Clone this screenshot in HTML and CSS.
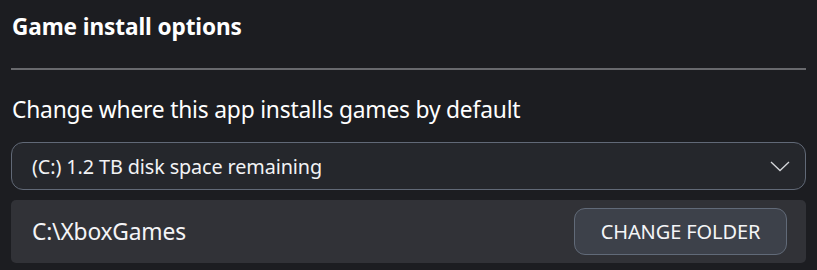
FILE: index.html
```html
<!DOCTYPE html>
<html>
<head>
<meta charset="utf-8">
<link rel="stylesheet" href="styles.css">
</head>
<body>
<div class="panel">
  <h2 class="title">Game install options</h2>
  <div class="divider"></div>
  <p class="label">Change where this app installs games by default</p>
  <div class="select">
    <span class="select-text">(C:) 1.2 TB disk space remaining</span>
    <svg class="chevron" width="20" height="11" viewBox="0 0 20 11"><path d="M1 1 L10 9.5 L19 1" fill="none" stroke="#d4d6da" stroke-width="1.3"/></svg>
  </div>
  <div class="folder-row">
    <span class="folder-path">C:\XboxGames</span>
    <button class="btn">CHANGE FOLDER</button>
  </div>
</div>
</body>
</html>
```

FILE: styles.css
```css
html, body {
  margin: 0;
  padding: 0;
  background: #1c1d21;
  width: 817px;
  height: 270px;
  overflow: hidden;
}
body {
  font-family: "Noto Sans", "Open Sans", sans-serif;
  color: #ffffff;
}
.panel {
  padding: 0 11px;
}
.title {
  margin: 0;
  padding-top: 12px;
  font-size: 22.6px;
  font-weight: 700;
  line-height: 30px;
  padding-left: 1px;
  letter-spacing: -0.1px;
}
.divider {
  margin-top: 26px;
  height: 2px;
  background: #68696d;
}
.label {
  margin: 25px 0 0 1px;
  font-size: 22.8px;
  line-height: 30px;
  letter-spacing: -0.2px;
}
.select {
  margin-top: 17px;
  box-sizing: border-box;
  height: 48px;
  border: 1.5px solid #616977;
  border-radius: 12px;
  background: #25272c;
  display: flex;
  align-items: center;
  justify-content: space-between;
  padding: 0 15px 0 20px;
}
.select-text {
  font-size: 19.8px;
  letter-spacing: -0.1px;
  color: #f2f3f5;
}
.chevron {
  display: block;
}
.folder-row {
  margin-top: 10px;
  height: 63px;
  box-sizing: border-box;
  background: #313237;
  border-radius: 5px;
  display: flex;
  align-items: center;
  justify-content: space-between;
  padding: 0 19px 0 21px;
}
.folder-path {
  font-size: 22.8px;
  letter-spacing: -0.2px;
  color: #f4f4f6;
}
.btn {
  width: 213px;
  height: 47px;
  box-sizing: border-box;
  background: #3d414a;
  border: 1.5px solid #616a78;
  border-radius: 11px;
  color: #f4f5f7;
  font-family: "Noto Sans", "Open Sans", sans-serif;
  font-size: 20px;
  letter-spacing: -0.1px;
  padding: 0;
}
```
